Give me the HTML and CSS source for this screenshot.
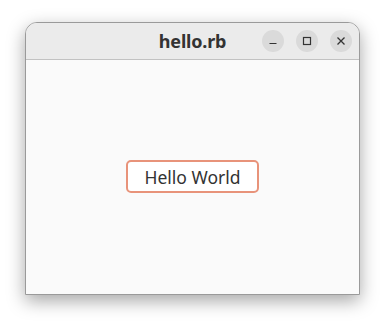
FILE: index.html
```html
<!DOCTYPE html>
<html lang="en">
<head>
  <meta charset="UTF-8" />
  <title>hello.rb</title>
  <link rel="stylesheet" href="styles.css">
</head>
<body>
  <div class="window">
    <header class="titlebar">
      <div class="title">hello.rb</div>
      <div class="controls">
        <button class="ctl" aria-label="Minimize">
          <svg width="10" height="10" viewBox="0 0 10 10"><path d="M1.5 7.5h7" stroke="#333" stroke-width="1.2"/></svg>
        </button>
        <button class="ctl" aria-label="Maximize">
          <svg width="10" height="10" viewBox="0 0 10 10"><rect x="1.5" y="1.5" width="7" height="7" fill="none" stroke="#333" stroke-width="1.2"/></svg>
        </button>
        <button class="ctl" aria-label="Close">
          <svg width="10" height="10" viewBox="0 0 10 10"><path d="M1.5 1.5l7 7M8.5 1.5l-7 7" stroke="#333" stroke-width="1.3"/></svg>
        </button>
      </div>
    </header>
    <main class="content">
      <button class="hello">Hello World</button>
    </main>
  </div>
</body>
</html>
```

FILE: styles.css
```css
html, body {
  height: 100%;
}

body {
  margin: 0;
  background-color: #ffffff;
  font-family: "Noto Sans", "Open Sans", sans-serif;
}

.window {
  margin: 22px 0 0 25px;
  width: 333px;
  height: 271px;
  border: 1px solid #9a9a9a;
  border-radius: 12px 12px 0 0;
  background-color: #fafafa;
  box-shadow: 0 6px 18px rgba(0, 0, 0, 0.35);
  display: flex;
  flex-direction: column;
  overflow: hidden;
}

.titlebar {
  height: 36px;
  background-color: #ebebeb;
  border-bottom: 1px solid #c2c2c2;
  display: flex;
  align-items: center;
  justify-content: center;
  position: relative;
}

.title {
  font-size: 18px;
  font-weight: bold;
  color: #333;
  letter-spacing: -0.2px;
  margin-left: 0;
}

.controls {
  position: absolute;
  right: 7px;
  top: 7px;
  display: flex;
  gap: 12px;
}

.ctl {
  width: 22px;
  height: 22px;
  border: none;
  border-radius: 50%;
  background-color: #dadada;
  padding: 0;
  display: flex;
  align-items: center;
  justify-content: center;
}

.content {
  flex: 1;
  display: flex;
  align-items: center;
  justify-content: center;
  padding-bottom: 1px;
}

.hello {
  width: 133px;
  height: 33px;
  border: 2px solid #e8937a;
  border-radius: 5px;
  background-color: #ffffff;
  color: #333;
  font-family: "Noto Sans", "Open Sans", sans-serif;
  font-size: 17.5px;
  padding: 0;
}
```
